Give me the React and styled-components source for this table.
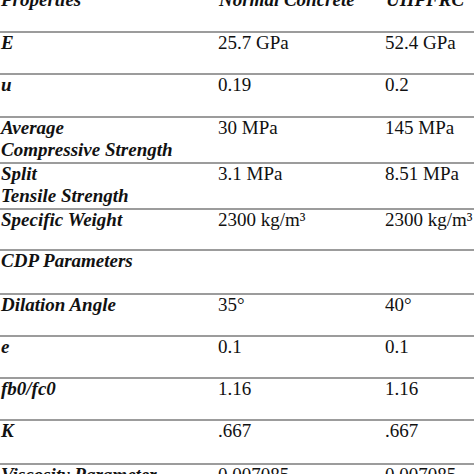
import React from "react";
import styled, { createGlobalStyle } from "styled-components";

const GlobalStyle = createGlobalStyle`
  html, body {
    margin: 0;
    padding: 0;
    background: #fff;
    overflow: hidden;
  }
  body {
    width: 474px;
    height: 474px;
  }
`;

const rows = [
  { label: ["E"], normal: "25.7 GPa", uhp: "52.4 GPa", h: 42 },
  { label: ["u"], normal: "0.19", uhp: "0.2", h: 43 },
  { label: ["Average", "Compressive Strength"], normal: "30 MPa", uhp: "145 MPa", h: 46 },
  { label: ["Split", "Tensile Strength"], normal: "3.1 MPa", uhp: "8.51 MPa", h: 46 },
  { label: ["Specific Weight"], normal: "2300 kg/m³", uhp: "2300 kg/m³", h: 41 },
  { label: ["CDP Parameters"], normal: "", uhp: "", h: 44 },
  { label: ["Dilation Angle"], normal: "35°", uhp: "40°", h: 42 },
  { label: ["e"], normal: "0.1", uhp: "0.1", h: 42 },
  { label: ["fb0/fc0"], normal: "1.16", uhp: "1.16", h: 42 },
  { label: ["K"], normal: ".667", uhp: ".667", h: 44 },
  { label: ["Viscosity Parameter"], normal: "0.007085", uhp: "0.007085", h: 60 },
];

const App = () => {
  return (
    <>
      <GlobalStyle />
      <Table>
        <Row $height={41} $first>
          <Label>Properties</Label>
          <Label>Normal Concrete</Label>
          <Label>UHPFRC</Label>
        </Row>
        {rows.map((r) => (
          <Row key={r.label.join(" ")} $height={r.h}>
            <Label>
              {r.label.map((l) => (
                <Line key={l}>{l}</Line>
              ))}
            </Label>
            <Value>{r.normal}</Value>
            <Value>{r.uhp}</Value>
          </Row>
        ))}
      </Table>
    </>
  );
};

export default App;

const Table = styled.div`
  width: 474px;
  margin-top: -10px;
  display: flex;
  flex-direction: column;
  font-family: "Liberation Serif", "Times New Roman", serif;
  font-size: 19px;
  line-height: 22px;
  color: #111;
`;

const Row = styled.div`
  display: grid;
  grid-template-columns: 218px 167px 1fr;
  height: ${(p) => p.$height}px;
  box-sizing: border-box;
  border-top: ${(p) => (p.$first ? "none" : "2px solid #9c9c9c")};
  white-space: nowrap;
  overflow: hidden;
`;

const Label = styled.div`
  font-weight: bold;
  font-style: italic;
  padding-left: 1px;
  margin-top: -1px;
`;

const Line = styled.div``;

const Value = styled.div`
  font-weight: normal;
  margin-top: -1px;
`;
